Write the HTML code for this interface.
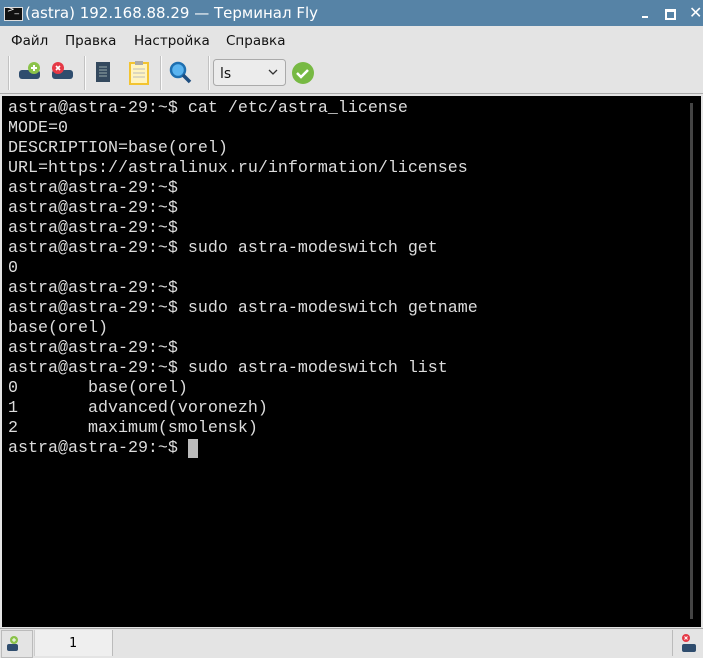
<!DOCTYPE html>
<html><head><style>
body{margin:0;width:703px;height:656px;background:#e4e4e4;position:relative;overflow:hidden;font-family:"Liberation Sans","DejaVu Sans",sans-serif}
#title{position:absolute;left:0;top:0;width:703px;height:26px;background:#5683a6;color:#fff;font-size:15px;font-family:"DejaVu Sans",sans-serif}
#menu{position:absolute;top:33px;left:0;font-size:13.5px;font-family:"DejaVu Sans",sans-serif;color:#111}
#menu span{position:absolute;top:0}
#term{position:absolute;left:2px;top:96px;width:699px;height:531px;background:#000}
pre{margin:0;position:absolute;left:6px;top:3px;font-family:"Liberation Mono","DejaVu Sans Mono",monospace;font-size:16.67px;line-height:20px;color:#dcdcdc}
.sep{position:absolute;top:56px;width:1px;height:34px;background:#c2c2c2;border-right:1px solid #fafafa}
</style></head><body>
<div id="title">
<div style="position:absolute;left:4px;top:7px;width:17px;height:12px;background:#111;border:1px solid #ddd"><span style="position:absolute;left:2px;top:-3px;font-size:9px;color:#fff">&gt;_</span></div>
<span style="position:absolute;left:25px;top:4px">(astra) 192.168.88.29 — Терминал Fly</span>
<div style="position:absolute;left:642px;top:16px;width:6px;height:2px;background:#fff"></div>
<div style="position:absolute;left:665px;top:9px;border:2px solid #fff;width:7px;height:6px;border-top-width:3px"></div>
<span style="position:absolute;left:689px;top:3px;font-size:16px">✕</span>
</div>
<div id="menu"><span style="left:11px">Файл</span><span style="left:65px">Правка</span><span style="left:134px">Настройка</span><span style="left:226px">Справка</span></div>
<div class="sep" style="left:8px"></div><div class="sep" style="left:84px"></div><div class="sep" style="left:160px"></div><div class="sep" style="left:208px"></div>
<svg style="position:absolute;left:0;top:56px" width="330" height="36">
<rect x="19" y="14" width="21" height="9" rx="3" fill="#2f4d6e"/><circle cx="34" cy="12" r="6" fill="#8bc34a"/><path d="M34 9v6M31 12h6" stroke="#fff" stroke-width="2"/>
<rect x="52" y="14" width="21" height="9" rx="3" fill="#2f4d6e"/><circle cx="58" cy="12" r="6" fill="#e53946"/><path d="M56 10l4 4M60 10l-4 4" stroke="#fff" stroke-width="1.6"/>
<rect x="96" y="6" width="14" height="20" fill="#34495e"/><path d="M99 11h8M99 14h8M99 17h8M99 20h8" stroke="#9aa" />
<rect x="130" y="7" width="18" height="21" fill="#fff4c0" stroke="#f3c431" stroke-width="2"/><rect x="135" y="5" width="8" height="4" fill="#aaa"/><path d="M133 13h12M133 17h12M133 21h12" stroke="#bbb"/>
<circle cx="178" cy="14" r="7" fill="#5ab4f0" stroke="#1e6fb0" stroke-width="2.5"/><path d="M183 19l7 7" stroke="#1e4e80" stroke-width="3.5"/>
<rect x="213.5" y="3.5" width="72" height="26" rx="3" fill="#ececec" stroke="#aaa"/>
<text x="220" y="22" font-size="14" font-family="DejaVu Sans" fill="#111">ls</text><path d="M269 14l4 4 4-4" stroke="#333" fill="none" stroke-width="1.3"/>
<circle cx="303" cy="17" r="11" fill="#77b943"/><path d="M297 17l4 4 7-7" stroke="#fff" stroke-width="2.5" fill="none"/>
</svg>
<div style="position:absolute;left:0;top:93px;width:703px;height:1px;background:#aaa"></div>
<div id="term"><pre>astra@astra-29:~$ cat /etc/astra_license
MODE=0
DESCRIPTION=base(orel)
URL=https://astralinux.ru/information/licenses
astra@astra-29:~$
astra@astra-29:~$
astra@astra-29:~$
astra@astra-29:~$ sudo astra-modeswitch get
0
astra@astra-29:~$
astra@astra-29:~$ sudo astra-modeswitch getname
base(orel)
astra@astra-29:~$
astra@astra-29:~$ sudo astra-modeswitch list
0       base(orel)
1       advanced(voronezh)
2       maximum(smolensk)
astra@astra-29:~$ <span style="background:#bbb"> </span></pre>
<div style="position:absolute;left:688px;top:7px;width:3px;height:516px;background:#444"></div></div>
<div style="position:absolute;left:0;top:628px;width:703px;height:1px;background:#aaa"></div>
<div style="position:absolute;left:1px;top:630px;width:30px;height:26px;border:1px solid #bbb;background:#e4e4e4"></div>
<svg style="position:absolute;left:6px;top:632px" width="20" height="22"><rect x="1" y="12" width="11" height="7" rx="2" fill="#2f4d6e"/><circle cx="8" cy="8" r="4" fill="#8bc34a"/><path d="M8 6v4M6 8h4" stroke="#fff"/></svg>
<div style="position:absolute;left:34px;top:630px;width:77px;height:26px;background:#efefef;border-left:1px solid #ccc;border-right:1px solid #bbb"></div>
<span style="position:absolute;left:69px;top:636px;font-size:13px;font-family:'DejaVu Sans Mono',monospace">1</span>
<div style="position:absolute;left:672px;top:630px;width:31px;height:26px;border-left:1px solid #bbb"></div>
<svg style="position:absolute;left:678px;top:632px" width="24" height="22"><rect x="4" y="12" width="14" height="8" rx="2" fill="#2f4d6e"/><circle cx="8" cy="6" r="4" fill="#e53946"/><path d="M6.5 4.5l3 3M9.5 4.5l-3 3" stroke="#fff"/></svg>
</body></html>
